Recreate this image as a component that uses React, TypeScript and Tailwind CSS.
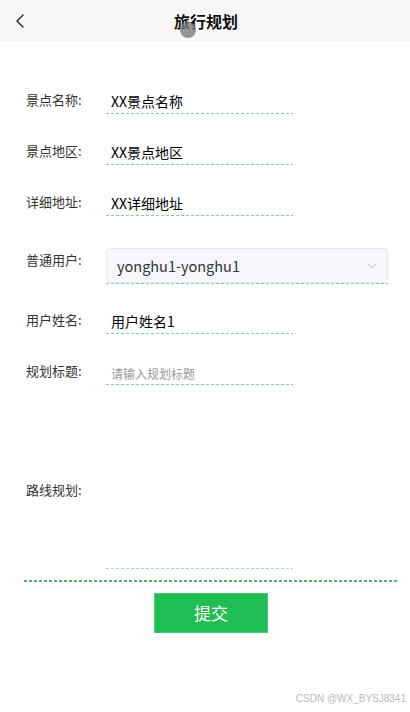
import { ChevronLeft, ChevronDown } from 'lucide-react';

const FONT = '"Microsoft YaHei", "Noto Sans CJK SC", "Noto Sans", sans-serif';

function Dash({ light = false }: { light?: boolean }) {
  return (
    <div
      className={`h-px ${
        light
          ? 'bg-[repeating-linear-gradient(90deg,#a8e0bb_0_3px,transparent_3px_5px)]'
          : 'bg-[repeating-linear-gradient(90deg,#7fd39b_0_3px,transparent_3px_5px)]'
      }`}
    />
  );
}

function Label({ text, top = true }: { text: string; top?: boolean }) {
  return (
    <div className={`w-[106px] shrink-0 pl-[26px] whitespace-nowrap text-[13px] leading-[16px] text-[#333] ${top ? 'pt-[4px]' : ''}`}>
      {text}
    </div>
  );
}

function TextRow({ label, value, placeholder, mt }: { label: string; value?: string; placeholder?: string; mt: string }) {
  return (
    <div className={`flex items-start ${mt}`}>
      <Label text={label} />
      <div className="w-[187px]">
        <div className="h-[25px] flex items-center pl-[5px]">
          {value ? (
            <span className="text-[14px] leading-[20px] text-black">{value}</span>
          ) : (
            <span className="text-[12px] leading-[16px] text-[#999] pt-[4px]">{placeholder}</span>
          )}
        </div>
        <Dash />
      </div>
    </div>
  );
}

export default function App() {
  return (
    <div className="relative w-[410px] h-[712px] bg-white overflow-hidden" style={{ fontFamily: FONT }}>
      <div className="h-[41px] bg-[#f7f7f7] flex items-center pl-[8px]">
        <ChevronLeft size={24} strokeWidth={1.4} className="text-[#222]" />
        <div className="flex-1 text-center text-[16px] font-bold text-[#111] pr-[30px]">旅行规划</div>
      </div>
      <div className="absolute left-[180px] top-[22px] w-[16px] h-[16px] rounded-full bg-[#7a7a7a] opacity-80" />

      <TextRow label="景点名称:" value="XX景点名称" mt="mt-[47px]" />
      <TextRow label="景点地区:" value="XX景点地区" mt="mt-[25px]" />
      <TextRow label="详细地址:" value="XX详细地址" mt="mt-[25px]" />

      <div className="flex items-start mt-[32px]">
        <Label text="普通用户:" />
        <div className="w-[282px]">
          <div className="h-[35px] bg-[#f5f7fa] rounded-[4px] border border-[#e4e7ed] flex items-center justify-between pl-[10px] pr-[8px]">
            <span className="text-[14.5px] text-[#333]">yonghu1-yonghu1</span>
            <ChevronDown size={14} strokeWidth={1.5} className="text-[#aaa]" />
          </div>
          <Dash />
        </div>
      </div>

      <TextRow label="用户姓名:" value="用户姓名1" mt="mt-[24px]" />
      <TextRow label="规划标题:" placeholder="请输入规划标题" mt="mt-[25px]" />

      <div className="flex items-center mt-[25px]">
        <Label text="路线规划:" top={false} />
        <div className="w-[187px]">
          <div className="h-[158px]" />
          <Dash light />
        </div>
      </div>

      <div className="ml-[24px] mr-[12px] mt-[11px] h-[2px] bg-[repeating-linear-gradient(90deg,#5fae7e_0_3px,transparent_3px_5px)]" />

      <div className="flex justify-center pl-[12px] mt-[11px]">
        <button className="w-[114px] h-[40px] bg-[#1fbd52] border border-[#3fcf6c] text-white text-[17px]">提交</button>
      </div>

      <div className="absolute right-[4px] bottom-[6px] text-[10px] text-[#bbb]" style={{ fontFamily: '"Liberation Sans", sans-serif' }}>
        CSDN @WX_BYSJ8341
      </div>
    </div>
  );
}
